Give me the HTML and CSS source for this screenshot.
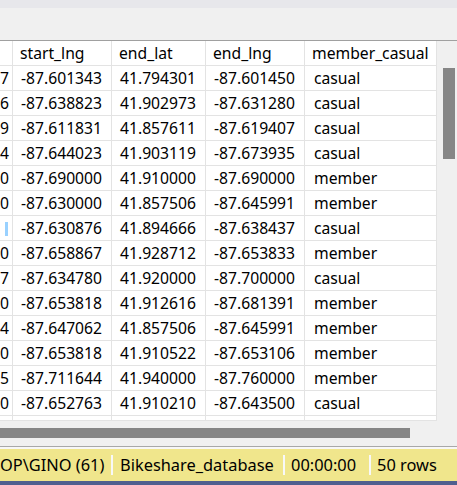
FILE: index.html
```html
<!DOCTYPE html>
<html>
<head>
<meta charset="utf-8">
<link rel="stylesheet" href="styles.css">
</head>
<body>
<div class="app">
  <div class="topband"></div>
  <div class="toolbar"></div>
  <div class="main">
    <div class="left">
      <div class="grid">
        <div class="row head">
          <div class="c c0"></div><div class="c">start_lng</div><div class="c">end_lat</div><div class="c">end_lng</div><div class="c">member_casual</div>
        </div>
        <div class="row"><div class="c c0">7</div><div class="c n">-87.601343</div><div class="c n">41.794301</div><div class="c n">-87.601450</div><div class="c t">casual</div></div>
        <div class="row"><div class="c c0">6</div><div class="c n">-87.638823</div><div class="c n">41.902973</div><div class="c n">-87.631280</div><div class="c t">casual</div></div>
        <div class="row"><div class="c c0">9</div><div class="c n">-87.611831</div><div class="c n">41.857611</div><div class="c n">-87.619407</div><div class="c t">casual</div></div>
        <div class="row"><div class="c c0">4</div><div class="c n">-87.644023</div><div class="c n">41.903119</div><div class="c n">-87.673935</div><div class="c t">casual</div></div>
        <div class="row"><div class="c c0">0</div><div class="c n">-87.690000</div><div class="c n">41.910000</div><div class="c n">-87.690000</div><div class="c t">member</div></div>
        <div class="row"><div class="c c0">0</div><div class="c n">-87.630000</div><div class="c n">41.857506</div><div class="c n">-87.645991</div><div class="c t">member</div></div>
        <div class="row"><div class="c c0"><span class="sel"></span></div><div class="c n">-87.630876</div><div class="c n">41.894666</div><div class="c n">-87.638437</div><div class="c t">casual</div></div>
        <div class="row"><div class="c c0">0</div><div class="c n">-87.658867</div><div class="c n">41.928712</div><div class="c n">-87.653833</div><div class="c t">member</div></div>
        <div class="row"><div class="c c0">7</div><div class="c n">-87.634780</div><div class="c n">41.920000</div><div class="c n">-87.700000</div><div class="c t">casual</div></div>
        <div class="row"><div class="c c0">0</div><div class="c n">-87.653818</div><div class="c n">41.912616</div><div class="c n">-87.681391</div><div class="c t">member</div></div>
        <div class="row"><div class="c c0">4</div><div class="c n">-87.647062</div><div class="c n">41.857506</div><div class="c n">-87.645991</div><div class="c t">member</div></div>
        <div class="row"><div class="c c0">0</div><div class="c n">-87.653818</div><div class="c n">41.910522</div><div class="c n">-87.653106</div><div class="c t">member</div></div>
        <div class="row"><div class="c c0">5</div><div class="c n">-87.711644</div><div class="c n">41.940000</div><div class="c n">-87.760000</div><div class="c t">member</div></div>
        <div class="row"><div class="c c0">0</div><div class="c n">-87.652763</div><div class="c n">41.910210</div><div class="c n">-87.643500</div><div class="c t">casual</div></div>
        <div class="row partial"><div class="c c0"></div><div class="c"></div><div class="c"></div><div class="c"></div><div class="c"></div></div>
      </div>
      <div class="hscroll"><div class="hthumb"></div></div>
    </div>
    <div class="vscroll"><div class="vthumb"></div></div>
  </div>
  <div class="sepline"></div>
  <div class="status">
    <div class="seg s1">OP\GINO (61)</div>
    <div class="seg s2">Bikeshare_database</div>
    <div class="seg s3">00:00:00</div>
    <div class="seg s4">50 rows</div>
  </div>
  <div class="bottomline"></div>
</div>
</body>
</html>
```

FILE: styles.css
```css
html, body {
  margin: 0;
  padding: 0;
  background: #f0f0f0;
}
.app {
  width: 457px;
  height: 485px;
  overflow: hidden;
  font-family: "Noto Sans", "Open Sans", sans-serif;
  font-size: 15.7px;
  color: #000;
  display: flex;
  flex-direction: column;
}
.topband {
  height: 8px;
  background: #e7e7eb;
  flex: none;
}
.toolbar {
  height: 32px;
  background: #f0f0f0;
  border-bottom: 1px solid #a0a0a0;
  flex: none;
}
.main {
  display: flex;
  height: 405px;
  flex: none;
}
.left {
  width: 437px;
  display: flex;
  flex-direction: column;
}
.grid {
  height: 380px;
  overflow: hidden;
  background: #fff;
}
.row {
  display: grid;
  grid-template-columns: 13px 99px 94px 99px 132px;
  height: 25px;
}
.row.partial {
  height: 5px;
  overflow: hidden;
}
.c {
  border-right: 1px solid #e3e3e3;
  border-bottom: 1px solid #e3e3e3;
  padding-left: 7px;
  line-height: 24px;
  white-space: nowrap;
  overflow: hidden;
}
.c.n { padding-left: 8px; }
.c.t { padding-left: 9px; }
.c.c0 {
  padding-left: 0;
  padding-right: 4px;
  text-align: right;
}
.sel {
  display: inline-block;
  width: 3px;
  height: 14px;
  background: #99d1ff;
  vertical-align: -2px;
}
.hscroll {
  height: 25px;
  padding-top: 7px;
  box-sizing: border-box;
}
.hthumb {
  width: 410px;
  height: 10px;
  background: #868686;
}
.vscroll {
  width: 20px;
  padding-top: 27px;
  padding-left: 6px;
  box-sizing: border-box;
}
.vthumb {
  width: 12px;
  height: 91px;
  background: #868686;
}
.sepline {
  height: 1px;
  background: #a8a8a8;
  border-bottom: 2px solid #f7f7f7;
  flex: none;
}
.status {
  height: 32px;
  background: #f0e68c;
  display: flex;
  align-items: center;
  font-size: 16.4px;
  flex: none;
}
.seg {
  height: 20px;
  line-height: 20px;
  border-right: 2px solid #f8f8f8;
  box-sizing: border-box;
  white-space: nowrap;
  flex: none;
}
.s1 { width: 113px; padding-left: 0; }
.s2 { width: 172px; padding-left: 7px; }
.s3 { width: 86px; padding-left: 6px; }
.s4 { border-right: none; padding-left: 6px; }
.bottomline {
  height: 4px;
  background: #4f5f8f;
  flex: none;
}
```
